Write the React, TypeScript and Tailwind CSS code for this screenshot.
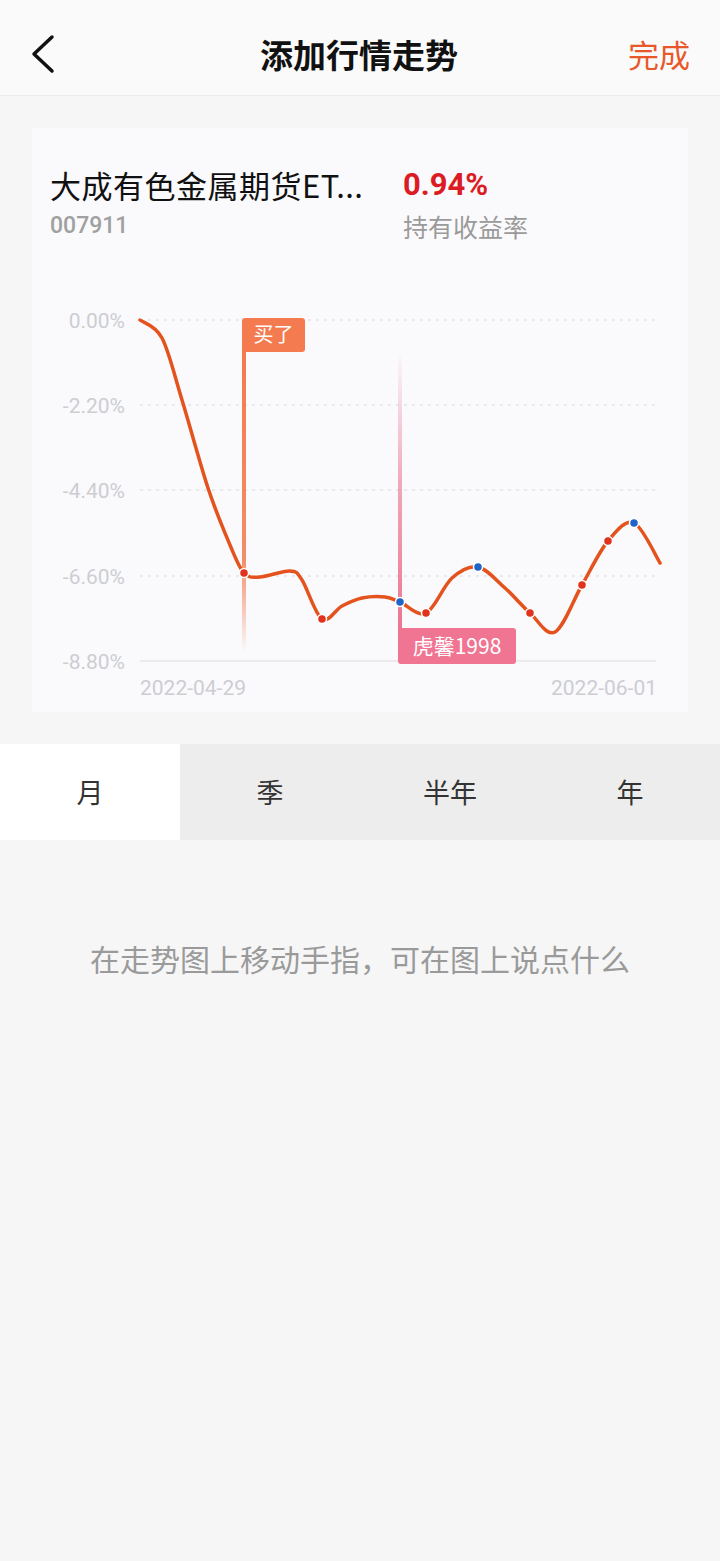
import React from "react";

type P = [number, number];

const pts: P[] = [
  [140, 320], [162, 338], [182, 400], [208, 488], [230, 545], [244, 573],
  [260, 577], [290, 571], [302, 580], [322, 619], [342, 606], [362, 598],
  [385, 597], [400, 602], [426, 613], [452, 578], [478, 567], [505, 588],
  [530, 613], [555, 632], [582, 585], [608, 541], [634, 523], [660, 563],
];

function smoothPath(p: P[]): string {
  let d = `M ${p[0][0]} ${p[0][1]}`;
  for (let i = 0; i < p.length - 1; i++) {
    const p0 = p[i - 1] || p[i];
    const p1 = p[i];
    const p2 = p[i + 1];
    const p3 = p[i + 2] || p2;
    const c1x = p1[0] + (p2[0] - p0[0]) / 6;
    const c1y = p1[1] + (p2[1] - p0[1]) / 6;
    const c2x = p2[0] - (p3[0] - p1[0]) / 6;
    const c2y = p2[1] - (p3[1] - p1[1]) / 6;
    d += ` C ${c1x.toFixed(1)} ${c1y.toFixed(1)} ${c2x.toFixed(1)} ${c2y.toFixed(1)} ${p2[0]} ${p2[1]}`;
  }
  return d;
}

const redDots: P[] = [[244, 573], [322, 619], [426, 613], [530, 613], [582, 585], [608, 541]];
const blueDots: P[] = [[400, 602], [478, 567], [634, 523]];

const grid = [
  { y: 320, label: "0.00%" },
  { y: 405, label: "-2.20%" },
  { y: 490, label: "-4.40%" },
  { y: 576, label: "-6.60%" },
];

function Chart() {
  return (
    <svg width={656} height={432} viewBox="32 280 656 432" className="block">
      <defs>
        <linearGradient id="buyLine" x1="0" y1="0" x2="0" y2="1">
          <stop offset="0" stopColor="#f27a4e" stopOpacity="1" />
          <stop offset="0.7" stopColor="#f27a4e" stopOpacity="0.85" />
          <stop offset="1" stopColor="#f27a4e" stopOpacity="0" />
        </linearGradient>
        <linearGradient id="huLine" x1="0" y1="0" x2="0" y2="1">
          <stop offset="0" stopColor="#ea6f8c" stopOpacity="0" />
          <stop offset="0.45" stopColor="#ea6f8c" stopOpacity="0.6" />
          <stop offset="1" stopColor="#ea6f8c" stopOpacity="1" />
        </linearGradient>
      </defs>
      <g className="font-[Roboto,sans-serif]" fontSize={21} fill="#cdcdd2">
        {grid.map((g) => (
          <g key={g.y}>
            <line x1={140} x2={656} y1={g.y} y2={g.y} stroke="#e3e3e8" strokeWidth={1.5} strokeDasharray="3 5" />
            <text x={125} y={g.y + 7.5} textAnchor="end">
              {g.label}
            </text>
          </g>
        ))}
        <line x1={140} x2={656} y1={661} y2={661} stroke="#e6e6ea" strokeWidth={1.5} />
        <text x={125} y={668.5} textAnchor="end">
          -8.80%
        </text>
        <text x={140} y={695}>
          2022-04-29
        </text>
        <text x={657} y={695} textAnchor="end">
          2022-06-01
        </text>
      </g>

      {/* buy marker */}
      <rect x={242} y={340} width={4} height={312} fill="url(#buyLine)" />
      <rect x={242} y={318} width={63} height={34} rx={3} fill="#f47b4f" />
      <text x={273.5} y={342} textAnchor="middle" fontSize={20} fill="#ffffff">
        买了
      </text>

      {/* hu marker */}
      <rect x={398} y={350} width={4} height={300} fill="url(#huLine)" />
      <rect x={398} y={628} width={118} height={36} rx={3} fill="#ef7592" />
      <text x={457} y={654} textAnchor="middle" fontSize={21} fill="#ffffff">
        虎馨1998
      </text>

      <path d={smoothPath(pts)} fill="none" stroke="#e4521d" strokeWidth={3.5} strokeLinecap="round" strokeLinejoin="round" />
      {redDots.map(([x, y], i) => (
        <circle key={"r" + i} cx={x} cy={y} r={4.5} fill="#e0321c" stroke="#ffffff" strokeWidth={1.5} />
      ))}
      {blueDots.map(([x, y], i) => (
        <circle key={"b" + i} cx={x} cy={y} r={4.5} fill="#1f63c8" stroke="#ffffff" strokeWidth={1.5} />
      ))}
    </svg>
  );
}

export default function App() {
  const tabs = ["月", "季", "半年", "年"];
  return (
    <div className="min-h-[1561px] w-[720px] bg-[#f6f6f6] font-['Noto_Sans_CJK_SC','Noto_Sans',sans-serif]">
      {/* header */}
      <div className="flex h-[96px] items-center border-b border-[#ececec] bg-[#fafafa] pl-[28px] pr-[30px] pt-[12px]">
        <div className="flex w-[120px] items-center">
          <svg width={30} height={42} viewBox="0 0 30 42">
            <polyline points="24,4 6,21 24,38" fill="none" stroke="#111" strokeWidth={3.5} strokeLinecap="round" strokeLinejoin="round" />
          </svg>
        </div>
        <div className="flex-1 text-center text-[33px] font-bold leading-[40px] text-[#111]">添加行情走势</div>
        <div className="w-[120px] text-right text-[31px] leading-[40px] text-[#e8582a]">完成</div>
      </div>

      {/* card */}
      <div className="mx-[32px] mt-[32px] h-[584px] w-[656px] bg-[#fafafc]">
        <div className="flex h-[152px] px-[18px] pt-[38px]">
          <div className="w-[353px]">
            <div className="text-[31px] leading-[38px] tracking-[0.5px] text-[#111]">大成有色金属期货ET...</div>
            <div className="mt-[4px] font-[Roboto,sans-serif] text-[23px] font-medium leading-[36px] text-[#a0a0a0]">
              007911
            </div>
          </div>
          <div>
            <div className="font-[Roboto,sans-serif] text-[31px] font-bold leading-[38px] text-[#dc1c24]">0.94%</div>
            <div className="mt-[4px] text-[25px] leading-[36px] text-[#9a9a9a]">持有收益率</div>
          </div>
        </div>
        <Chart />
      </div>

      {/* tabs */}
      <div className="mt-[32px] grid h-[96px] grid-cols-4">
        {tabs.map((t, i) => (
          <div
            key={t}
            className={
              i === 0
                ? "flex items-center justify-center bg-white text-[27px] text-[#333]"
                : "flex items-center justify-center bg-[#ededed] text-[27px] text-[#333]"
            }
          >
            {t}
          </div>
        ))}
      </div>

      <div className="mt-[98px] text-center text-[30px] leading-[40px] text-[#9a9a9a]">
        在走势图上移动手指，可在图上说点什么
      </div>
    </div>
  );
}
